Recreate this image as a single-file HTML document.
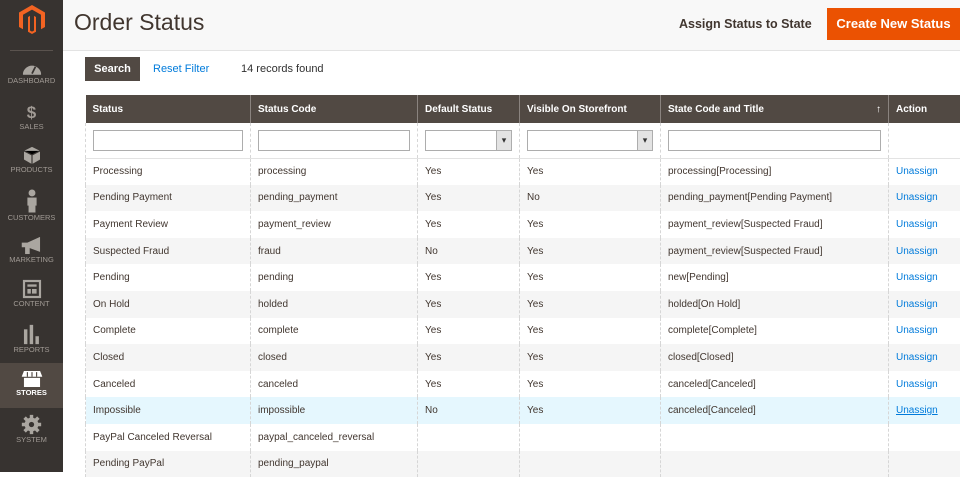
<!DOCTYPE html><html><head><style>
*{margin:0;padding:0;box-sizing:border-box}
body{width:960px;height:472px;overflow:hidden;font-family:"Liberation Sans",sans-serif;background:#fff;position:relative;color:#303030}
#sb{position:absolute;left:0;top:0;width:63px;height:472px;background:#373330}
.it{position:absolute;left:0;width:63px;text-align:center;font-size:7.5px;color:#a09a94;text-transform:uppercase}
.it svg{display:block;margin:0 auto 2px;transform:scale(1.15)}
#hd{position:absolute;left:63px;top:0;right:0;height:51px;background:#f8f8f8;border-bottom:1px solid #e3e3e3}
h1{position:absolute;left:11px;top:9px;font-weight:300;font-size:23px;color:#41362f}
.as{position:absolute;left:616px;top:17px;font-size:12.5px;color:#41362f;font-weight:bold}
.cn{position:absolute;left:764px;top:8px;width:133px;height:32px;background:#eb5202;color:#fff;font-weight:bold;font-size:13px;line-height:32px;text-align:center}
.sbtn{position:absolute;left:85px;top:57px;width:55px;height:24px;background:#514943;color:#fff;font-weight:bold;font-size:11px;line-height:24px;text-align:center}
.rf{position:absolute;left:153px;top:63px;font-size:11px;color:#007bdb}
.rc{position:absolute;left:241px;top:63px;font-size:11px;color:#303030}
table{position:absolute;left:85px;top:95px;border-collapse:collapse;font-size:10px;width:880px}
th{background:#514943;color:#fff;text-align:left;height:28px;padding:0 7px;font-size:10px;border-left:1px solid #8a837f}
th:first-child{border-left:none}
td{height:26.6px;padding:0 7px;border-left:1px dashed #d6d6d6;color:#41362f}
tr.f td{height:35px;background:#fff;border-bottom:1px solid #e3e3e3}
tr.e td{background:#f5f5f5}
tr.h td{background:#e5f7fe}
.in{height:21px;border:1px solid #adadad;background:#fff;position:relative}
.dd:after{content:"▾";position:absolute;right:0;top:0;width:14px;height:19px;background:#e3e3e3;border-left:1px solid #adadad;font-size:9px;line-height:19px;text-align:center;color:#333}
a{color:#007bdb;text-decoration:none}
</style></head><body>
<div id="sb">
<svg style="position:absolute;left:19px;top:5px" width="26" height="29" viewBox="0 0 26 29"><path d="M13 0L26 7.5V22L22 24.3V9.8L13 4.6 4 9.8V24.3L0 22V7.5Z M13 29L9 26.7V12L11 10.9V25.5L13 26.6 15 25.5V10.9L17 12V26.7Z" fill="#f26322"/></svg>
<div style="position:absolute;left:10px;top:50px;width:43px;height:1px;background:#5a534e"></div>
<div class="it" style="top:63px"><svg width="16" height="11" viewBox="0 0 16 11"><path d="M0 11A8 8 0 0 1 16 11Z" fill="#aaa6a0"/><path d="M8 10L11 4" stroke="#373330" stroke-width="1.5"/></svg>Dashboard</div>
<div class="it" style="top:104px"><div style="font-size:17px;font-weight:bold;line-height:18px">$</div>Sales</div>
<div class="it" style="top:148px"><svg width="14" height="15" viewBox="0 0 14 15"><path d="M7 0L14 3.5V11L7 15 0 11V3.5Z" fill="#aaa6a0"/><path d="M0 3.5L7 7 14 3.5M7 7V15" stroke="#373330"/></svg>Products</div>
<div class="it" style="top:191px"><svg width="10" height="20" viewBox="0 0 10 20"><circle cx="5" cy="3" r="3" fill="#aaa6a0"/><rect x="1" y="7" width="8" height="7" fill="#aaa6a0"/><rect x="2" y="13" width="6" height="7" fill="#aaa6a0"/></svg>Customers</div>
<div class="it" style="top:238px"><svg width="18" height="15" viewBox="0 0 18 15"><path d="M0 5H5L16 0V13L5 9H0Z M3 9H7V15H3Z" fill="#aaa6a0"/></svg>Marketing</div>
<div class="it" style="top:281px"><svg width="16" height="16" viewBox="0 0 16 16"><rect x="1" y="1" width="14" height="14" fill="none" stroke="#aaa6a0" stroke-width="2"/><rect x="4" y="4" width="8" height="2" fill="#aaa6a0"/><rect x="4" y="8" width="3" height="4" fill="#aaa6a0"/><rect x="8" y="8" width="4" height="4" fill="#aaa6a0"/></svg>Content</div>
<div class="it" style="top:326px"><svg width="16" height="17" viewBox="0 0 16 17"><rect x="1" y="4" width="3" height="13" fill="#aaa6a0"/><rect x="6" y="0" width="3" height="17" fill="#aaa6a0"/><rect x="11" y="10" width="3" height="7" fill="#aaa6a0"/></svg>Reports</div>
<div style="position:absolute;left:0;top:363px;width:63px;height:45px;background:#514943"></div>
<div class="it" style="top:372px;color:#fff;font-weight:bold"><svg width="18" height="14" viewBox="0 0 18 14"><path d="M2 0H16L18 5H0Z" fill="#fff"/><path d="M2 6H16V14H2Z" fill="#fff"/><path d="M5 1V5M9 1V5M13 1V5" stroke="#514943"/></svg>Stores</div>
<div class="it" style="top:416px"><svg width="17" height="17" viewBox="0 0 17 17"><circle cx="8.5" cy="8.5" r="6" fill="#aaa6a0"/><path d="M8.5 0V17M0 8.5H17M2.5 2.5L14.5 14.5M14.5 2.5L2.5 14.5" stroke="#aaa6a0" stroke-width="3"/><circle cx="8.5" cy="8.5" r="2.3" fill="#373330"/></svg>System</div>
</div>
<div id="hd"><h1>Order Status</h1><div class="as">Assign Status to State</div><div class="cn">Create New Status</div></div>
<div class="sbtn">Search</div><div class="rf">Reset Filter</div><div class="rc">14 records found</div>
<table>
<tr><th style="width:165px">Status</th><th style="width:167px">Status Code</th><th style="width:102px">Default Status</th><th style="width:141px">Visible On Storefront</th><th style="width:228px">State Code and Title<span style="float:right">↑</span></th><th>Action</th></tr>
<tr class="f"><td><div class="in"></div></td><td><div class="in"></div></td><td><div class="in dd"></div></td><td><div class="in dd"></div></td><td><div class="in"></div></td><td></td></tr>
<tr><td>Processing</td><td>processing</td><td>Yes</td><td>Yes</td><td>processing[Processing]</td><td><a>Unassign</a></td></tr>
<tr class="e"><td>Pending Payment</td><td>pending_payment</td><td>Yes</td><td>No</td><td>pending_payment[Pending Payment]</td><td><a>Unassign</a></td></tr>
<tr><td>Payment Review</td><td>payment_review</td><td>Yes</td><td>Yes</td><td>payment_review[Suspected Fraud]</td><td><a>Unassign</a></td></tr>
<tr class="e"><td>Suspected Fraud</td><td>fraud</td><td>No</td><td>Yes</td><td>payment_review[Suspected Fraud]</td><td><a>Unassign</a></td></tr>
<tr><td>Pending</td><td>pending</td><td>Yes</td><td>Yes</td><td>new[Pending]</td><td><a>Unassign</a></td></tr>
<tr class="e"><td>On Hold</td><td>holded</td><td>Yes</td><td>Yes</td><td>holded[On Hold]</td><td><a>Unassign</a></td></tr>
<tr><td>Complete</td><td>complete</td><td>Yes</td><td>Yes</td><td>complete[Complete]</td><td><a>Unassign</a></td></tr>
<tr class="e"><td>Closed</td><td>closed</td><td>Yes</td><td>Yes</td><td>closed[Closed]</td><td><a>Unassign</a></td></tr>
<tr><td>Canceled</td><td>canceled</td><td>Yes</td><td>Yes</td><td>canceled[Canceled]</td><td><a>Unassign</a></td></tr>
<tr class="h"><td>Impossible</td><td>impossible</td><td>No</td><td>Yes</td><td>canceled[Canceled]</td><td><a style="text-decoration:underline">Unassign</a></td></tr>
<tr><td>PayPal Canceled Reversal</td><td>paypal_canceled_reversal</td><td></td><td></td><td></td><td></td></tr>
<tr class="e"><td>Pending PayPal</td><td>pending_paypal</td><td></td><td></td><td></td><td></td></tr>
</table>
</body></html>
